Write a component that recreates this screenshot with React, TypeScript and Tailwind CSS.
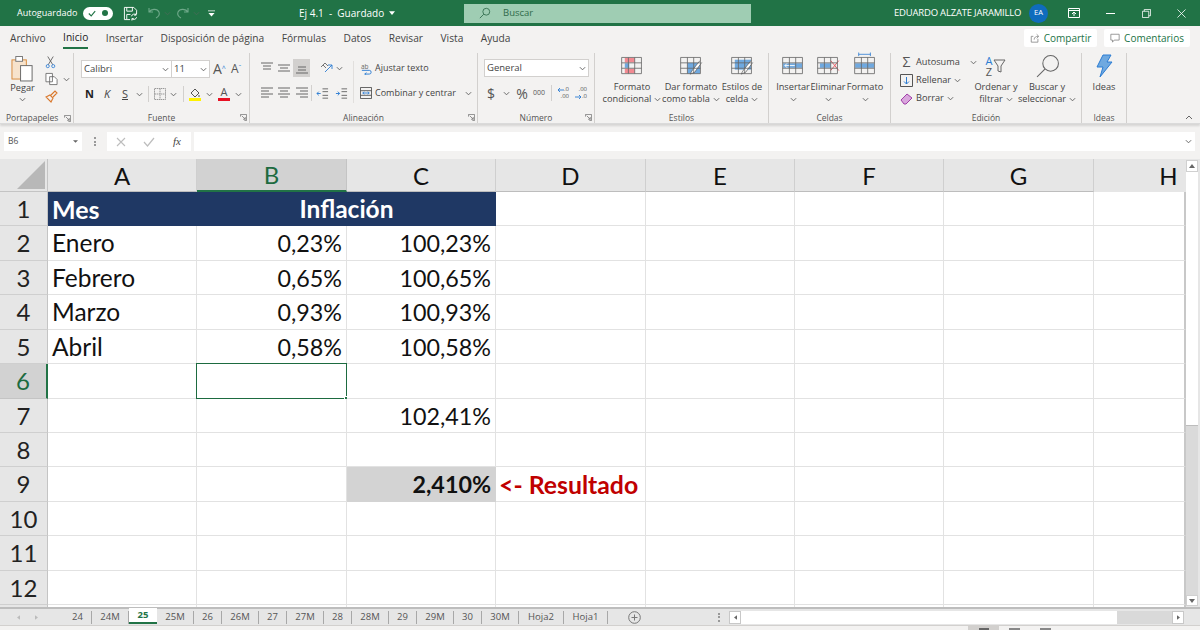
import type { ReactNode } from 'react';

const CELL_FONT = "font-['Lato','Carlito','Liberation_Sans',sans-serif]";

function Chevron({ className = '' }: { readonly className?: string }) {
  return (
    <svg viewBox="0 0 8 5" className={`w-[7px] h-[5px] shrink-0 ${className}`} fill="none" stroke="#666" strokeWidth="1.1">
      <path d="M1 1l3 3 3-3" />
    </svg>
  );
}

function Launcher() {
  return (
    <svg viewBox="0 0 8 8" className="w-[7px] h-[7px]" fill="none" stroke="#777" strokeWidth="0.9">
      <path d="M.5 3V.5H7.5V7.5H5M2 2l4 4M6 3.5V6H3.5" />
    </svg>
  );
}

interface GroupProps {
  readonly width: string;
  readonly label: string;
  readonly launcher?: boolean;
  readonly children: ReactNode;
}

function Group({ width, label, launcher, children }: GroupProps) {
  return (
    <div className={`${width} shrink-0 mt-[3px] border-r border-[#D2D0CE] flex flex-col`}>
      <div className="flex-1 flex min-h-0">{children}</div>
      <div className="h-[10px] relative text-center text-[8.5px] leading-[10px] text-[#555] whitespace-nowrap">
        {label}
        {launcher && (
          <span className="absolute right-[2px] top-[1px] flex">
            <Launcher />
          </span>
        )}
      </div>
    </div>
  );
}

interface BigButtonProps {
  readonly width: string;
  readonly icon: ReactNode;
  readonly lines: readonly ReactNode[];
}

function BigButton({ width, icon, lines }: BigButtonProps) {
  return (
    <div className={`${width} shrink-0 flex flex-col items-center`}>
      <div className="h-[26px] mb-[2px] flex items-center justify-center">{icon}</div>
      {lines.map((line, i) => (
        <div key={i} className="h-[12px] flex items-center gap-[3px] text-[9.2px] text-[#444] whitespace-nowrap">
          {line}
        </div>
      ))}
    </div>
  );
}

function Slot({ width, children, className = '' }: { readonly width: string; readonly children?: ReactNode; readonly className?: string }) {
  return <div className={`${width} shrink-0 h-full flex items-center justify-center ${className}`}>{children}</div>;
}

function VSep() {
  return <div className="w-px h-[16px] bg-[#D2D0CE]" />;
}

function AlignIcon({ kind }: { readonly kind: 'top' | 'mid' | 'bottom' | 'left' | 'center' | 'right' }) {
  const paths = {
    top: 'M1 2h12M3 5h8M3 8h8',
    mid: 'M1 4h12M3 7h8M1 10h12',
    bottom: 'M3 6h8M3 9h8M1 12h12',
    left: 'M1 2h12M1 5h8M1 8h12M1 11h8',
    center: 'M1 2h12M3 5h8M1 8h12M3 11h8',
    right: 'M1 2h12M5 5h8M1 8h12M5 11h8',
  };
  return (
    <svg viewBox="0 0 14 14" className="w-[14px] h-[14px]" fill="none" stroke="#666" strokeWidth="1">
      <path d={paths[kind]} />
    </svg>
  );
}

function TitleBar() {
  return (
    <div className="h-[26px] shrink-0 bg-[#217346] flex items-center text-white text-[10px]">
      <div className="w-[464px] shrink-0 flex items-center pl-[17px]">
        <span className="w-[66px] text-[9px] whitespace-nowrap">Autoguardado</span>
        <div className="w-[30px] h-[13px] rounded-full bg-white flex items-center justify-between px-[5px]">
          <svg viewBox="0 0 10 8" className="w-[8px] h-[7px]" fill="none" stroke="#217346" strokeWidth="1.4">
            <path d="M1 4l3 3 5-6" />
          </svg>
          <span className="w-[6px] h-[6px] rounded-full bg-[#217346]" />
        </div>
        <svg viewBox="0 0 16 16" className="w-[15px] h-[15px] ml-[10px]" fill="none" stroke="#fff" strokeWidth="1">
          <path d="M1.5 1.5h10l3 3v4M1.5 1.5v13h6M4 1.5v4h6v-4M4 14v-5h4" />
          <path d="M9 11a3 3 0 0 1 5-1.5M14.5 12a3 3 0 0 1-5 1.5M14 7.5v2.2h-2.2M9.5 15.500v-2h2" />
        </svg>
        <svg viewBox="0 0 14 14" className="w-[14px] h-[14px] ml-[9px]" fill="none" stroke="#6FA98A" strokeWidth="1.1">
          <path d="M2 2v4h4M2 6c2-3 8-4 10 0 1 3-1 5-3 6" />
        </svg>
        <Chevron className="ml-[3px] opacity-50" />
        <svg viewBox="0 0 14 14" className="w-[14px] h-[14px] ml-[5px]" fill="none" stroke="#6FA98A" strokeWidth="1.1">
          <path d="M12 2v4H8M12 6c-2-3-8-4-10 0-1 3 1 5 3 6" />
        </svg>
        <Chevron className="ml-[3px] opacity-50" />
        <svg viewBox="0 0 8 8" className="w-[7px] h-[7px] ml-[8px]" fill="#fff">
          <path d="M0 .5h8V1.500H0zM.5 3.500h7L4 7.500z" />
        </svg>
        <span className="ml-[84px] flex items-center whitespace-nowrap">
          Ej 4.1&nbsp; -&nbsp; Guardado
          <svg viewBox="0 0 8 5" className="w-[6px] h-[4px] ml-[5px]" fill="#fff">
            <path d="M0 0h8L4 5z" />
          </svg>
        </span>
      </div>
      <div className="w-[287px] h-[19px] shrink-0 bg-[#9FCDB3] flex items-center pl-[15px] text-[9.5px] text-[#2F6B4B]">
        <svg viewBox="0 0 14 14" className="w-[12px] h-[12px]" fill="none" stroke="#2F6B4B" strokeWidth="1">
          <circle cx="8.500" cy="5.500" r="4" />
          <path d="M5.500 8.500L1 13" />
        </svg>
        <span className="ml-[12px]">Buscar</span>
      </div>
      <div className="flex-1 flex items-center pl-[143px]">
        <span className="w-[135px] whitespace-nowrap text-[9.5px] tracking-[-0.2px]">EDUARDO ALZATE JARAMILLO</span>
        <span className="w-[19px] h-[19px] rounded-full bg-[#0F6CBD] flex items-center justify-center text-[7.5px]">EA</span>
        <svg viewBox="0 0 12 10" className="w-[12px] h-[10px] ml-[20px]" fill="none" stroke="#fff">
          <path d="M.5.500h11v9H.500zM.5 2.500h11M6 8V4M4 6l2-2 2 2" />
        </svg>
        <span className="w-[9px] h-px bg-white ml-[26px]" />
        <svg viewBox="0 0 10 10" className="w-[9px] h-[9px] ml-[27px]" fill="none" stroke="#fff" strokeWidth="0.9">
          <path d="M.5 2.500h7v7h-7zM2.500 2.500v-2h7v7h-2" />
        </svg>
        <svg viewBox="0 0 10 10" className="w-[9px] h-[9px] ml-[26px]" fill="none" stroke="#fff" strokeWidth="0.9">
          <path d="M.5.500l9 9M9.500.500l-9 9" />
        </svg>
      </div>
    </div>
  );
}

const TABS = ['Archivo', 'Inicio', 'Insertar', 'Disposición de página', 'Fórmulas', 'Datos', 'Revisar', 'Vista', 'Ayuda'];

function TabRow() {
  return (
    <div className="h-[24px] shrink-0 flex items-center pl-[10px] pr-[10px] text-[10.2px] text-[#444]">
      <div className="flex items-start gap-[17.5px] h-[22px]">
        {TABS.map((tab) => (
          <span
            key={tab}
            className={`h-[22px] pt-px flex items-center whitespace-nowrap ${
              tab === 'Inicio' ? 'text-[#222] border-b-2 border-[#217346]' : ''
            }`}
          >
            {tab}
          </span>
        ))}
      </div>
      <div className="ml-auto flex gap-[7px] text-[10px] text-[#217346]">
        <div className="w-[73px] h-[18px] bg-white flex items-center justify-center gap-[4px] rounded-[2px]">
          <svg viewBox="0 0 12 12" className="w-[10px] h-[10px]" fill="none" stroke="#888">
            <path d="M4 4H1.500v7h8V7M5 8c0-3 2-4 5-4M8 1.500L10.500 4 8 6.500" />
          </svg>
          Compartir
        </div>
        <div className="w-[86px] h-[18px] bg-white flex items-center justify-center gap-[4px] rounded-[2px]">
          <svg viewBox="0 0 12 12" className="w-[10px] h-[10px]" fill="none" stroke="#888">
            <path d="M1 1.500h10v7H5L3 11V8.500H1z" />
          </svg>
          Comentarios
        </div>
      </div>
    </div>
  );
}

function Clipboard() {
  return (
    <div className="w-[74px] shrink-0 mt-[3px] border-r border-[#D2D0CE] flex flex-col">
      <div className="flex-1 flex min-h-0">
        <div className="w-[45px] shrink-0 flex flex-col items-center">
          <svg viewBox="0 0 24 28" className="w-[23px] h-[27px] mt-[2px]" fill="none">
            <rect x="1" y="5" width="15" height="20" fill="#F7E3CC" stroke="#D88A3A" />
            <rect x="5" y="1.500" width="7" height="5" fill="#fff" stroke="#777" />
            <rect x="10" y="11" width="12" height="16" fill="#fff" stroke="#666" />
          </svg>
          <span className="h-[12px] leading-[12px] text-[9.200px] text-[#444]">Pegar</span>
          <Chevron className="mt-[3px]" />
        </div>
        <div className="flex flex-col items-start gap-[3px] pt-[2px]">
          <svg viewBox="0 0 12 14" className="w-[11px] h-[14px]" fill="none" stroke="#555" strokeWidth="0.9">
            <path d="M3 1l5.500 9M9 1L3.500 10" />
            <circle cx="3" cy="11.500" r="1.700" stroke="#2B7CD3" />
            <circle cx="9" cy="11.500" r="1.700" stroke="#2B7CD3" />
          </svg>
          <div className="flex items-center gap-[5px]">
            <svg viewBox="0 0 14 14" className="w-[13px] h-[14px]" fill="none" stroke="#666" strokeWidth="0.9">
              <path d="M1 1h7v9H1zM5 4.500h5l3 3V13H5z" fill="#fff" />
            </svg>
            <Chevron />
          </div>
          <svg viewBox="0 0 14 14" className="w-[14px] h-[14px]" fill="none" stroke="#D9782D" strokeWidth="1.1">
            <path d="M1 8l4-2 3 3-2 4zM6 6l4-4 2 2-4 4" />
          </svg>
        </div>
      </div>
      <div className="h-[10px] flex items-center text-[8.5px] text-[#555] pl-[6px] pr-[2px] justify-between">
        Portapapeles
        <Launcher />
      </div>
    </div>
  );
}

function FontGroup() {
  return (
    <Group width="w-[176px]" label="Fuente" launcher>
      <div className="flex flex-col pl-[7px] pt-[7px]">
        <div className="h-[18px] flex items-center">
          <div className="w-[91px] h-[18px] bg-white border border-[#D2D0CE] flex items-center justify-between px-[2px] text-[9.5px] text-[#444]">
            Calibri
            <Chevron />
          </div>
          <div className="w-[38px] h-[18px] bg-white border border-l-0 border-[#D2D0CE] flex items-center justify-between px-[2px] text-[9.5px] text-[#444]">
            11
            <Chevron />
          </div>
          <span className="ml-[3px] text-[14px] leading-none text-[#555]">
            A<sup className="text-[7px] text-[#2B7CD3]">^</sup>
          </span>
          <span className="ml-[5px] text-[12px] leading-none text-[#555]">
            A<sup className="text-[7px] text-[#2B7CD3]">ˇ</sup>
          </span>
        </div>
        <div className="h-[18px] mt-[7px] flex items-center text-[#444]">
          <Slot width="w-[17px]" className="font-bold text-[11px] text-[#222]">N</Slot>
          <Slot width="w-[18px]" className="italic text-[11px]">K</Slot>
          <Slot width="w-[18px]" className="underline text-[11px]">S</Slot>
          <Slot width="w-[10px]"><Chevron /></Slot>
          <Slot width="w-[8px]"><VSep /></Slot>
          <Slot width="w-[16px]">
            <svg viewBox="0 0 12 12" className="w-[12px] h-[12px]" fill="none" stroke="#999" strokeDasharray="1.500 .6">
              <path d="M.5.500h11v11H.500zM6 .5v11M.5 6h11" />
            </svg>
          </Slot>
          <Slot width="w-[11px]"><Chevron /></Slot>
          <Slot width="w-[8px]"><VSep /></Slot>
          <Slot width="w-[16px]">
            <div className="flex flex-col items-center">
              <svg viewBox="0 0 12 10" className="w-[12px] h-[10px]" fill="none" stroke="#555">
                <path d="M2 5l4-4 4 4-4 4zM10 7v2" />
              </svg>
              <div className="w-[12px] h-[3px] bg-[#FFF200]" />
            </div>
          </Slot>
          <Slot width="w-[12px]"><Chevron /></Slot>
          <Slot width="w-[18px]">
            <div className="flex flex-col items-center text-[11px] leading-[10px] text-[#555]">
              A
              <div className="w-[12px] h-[3px] bg-[#E81123] mt-[1px]" />
            </div>
          </Slot>
          <Slot width="w-[10px]"><Chevron /></Slot>
        </div>
      </div>
    </Group>
  );
}

function AlignmentGroup() {
  return (
    <Group width="w-[228px]" label="Alineación" launcher>
      <div className="flex pl-[8px] pt-[6px]">
        <div className="w-[95px] flex flex-col">
          <div className="h-[18px] flex items-center">
            <Slot width="w-[17px]"><AlignIcon kind="top" /></Slot>
            <Slot width="w-[18px]"><AlignIcon kind="mid" /></Slot>
            <Slot width="w-[17px]" className="bg-[#D2D0CE]"><AlignIcon kind="bottom" /></Slot>
            <Slot width="w-[9px]" />
            <Slot width="w-[16px]">
              <svg viewBox="0 0 14 14" className="w-[14px] h-[14px]" fill="none" stroke="#666" strokeWidth="0.9">
                <path d="M1 6l4-4 3 3M3 4l3 3" />
                <path d="M5 11l7-7M12 8V4H8" stroke="#2B7CD3" />
              </svg>
            </Slot>
            <Slot width="w-[8px]"><Chevron /></Slot>
          </div>
          <div className="h-[18px] mt-[7px] flex items-center">
            <Slot width="w-[17px]"><AlignIcon kind="left" /></Slot>
            <Slot width="w-[18px]"><AlignIcon kind="center" /></Slot>
            <Slot width="w-[17px]"><AlignIcon kind="right" /></Slot>
            <Slot width="w-[2px]"><VSep /></Slot>
            <Slot width="w-[21px]">
              <svg viewBox="0 0 14 14" className="w-[13px] h-[13px]" fill="none" stroke="#666">
                <path d="M7 2h6M7 5h6M7 9h6M7 12h6" />
                <path d="M5 7H1M3 5L1 7l2 2" stroke="#2B7CD3" />
              </svg>
            </Slot>
            <Slot width="w-[16px]">
              <svg viewBox="0 0 14 14" className="w-[13px] h-[13px]" fill="none" stroke="#666">
                <path d="M7 2h6M7 5h6M7 9h6M7 12h6" />
                <path d="M1 7h4M3 5l2 2-2 2" stroke="#2B7CD3" />
              </svg>
            </Slot>
          </div>
        </div>
        <div className="w-px h-[42px] bg-[#E1DFDD] mt-[2px]" />
        <div className="flex flex-col pl-[6px] text-[9px] text-[#444]">
          <div className="h-[18px] flex items-center gap-[2px] whitespace-nowrap">
            <svg viewBox="0 0 14 14" className="w-[13px] h-[13px]" fill="none" stroke="#2B7CD3">
              <path d="M2 9h8a2 2 0 0 1 0 4H6M7 11.500l-2 1.500 2 1.500" />
              <text x="1" y="7" fontSize="7" fill="#666" stroke="none">ab</text>
            </svg>
            Ajustar texto
          </div>
          <div className="h-[18px] mt-[7px] flex items-center gap-[3px] whitespace-nowrap">
            <svg viewBox="0 0 13 13" className="w-[12px] h-[12px]" fill="none" stroke="#555">
              <path d="M.5.500h12v12H.500zM.5 4h12M.5 9h12" />
              <path d="M3 6.500h7M4.500 5L3 6.500 4.500 8M8.500 5L10 6.500 8.500 8" stroke="#2B7CD3" />
            </svg>
            Combinar y centrar
            <Chevron className="ml-[6px]" />
          </div>
        </div>
      </div>
    </Group>
  );
}

function NumberGroup() {
  return (
    <Group width="w-[117px]" label="Número" launcher>
      <div className="flex flex-col pl-[6px] pt-[6px]">
        <div className="w-[105px] h-[18px] bg-white border border-[#D2D0CE] flex items-center justify-between px-[2px] text-[9.500px] text-[#444]">
          General
          <Chevron />
        </div>
        <div className="h-[18px] mt-[7px] flex items-center text-[#555]">
          <Slot width="w-[14px]" className="text-[14px]">$</Slot>
          <Slot width="w-[16px]"><Chevron /></Slot>
          <Slot width="w-[16px]" className="text-[14px]">%</Slot>
          <Slot width="w-[18px]" className="text-[7px]">000</Slot>
          <Slot width="w-[6px]"><VSep /></Slot>
          <Slot width="w-[18px]">
            <div className="flex flex-col items-end text-[6px] leading-[7px]">
              <span className="flex items-center">
                <svg viewBox="0 0 7 6" className="w-[7px] h-[6px]" fill="none" stroke="#2B7CD3" strokeWidth="0.9">
                  <path d="M7 3H1M3 1L1 3l2 2" />
                </svg>
                .0
              </span>
              <span>.00</span>
            </div>
          </Slot>
          <Slot width="w-[18px]">
            <div className="flex flex-col items-end text-[6px] leading-[7px]">
              <span>.00</span>
              <span className="flex items-center">
                <svg viewBox="0 0 7 6" className="w-[7px] h-[6px]" fill="none" stroke="#2B7CD3" strokeWidth="0.9">
                  <path d="M0 3h6M4 1l2 2-2 2" />
                </svg>
                .0
              </span>
            </div>
          </Slot>
        </div>
      </div>
    </Group>
  );
}

function TableIcon({ children }: { readonly children?: ReactNode }) {
  return (
    <svg viewBox="0 0 24 20" className="w-[22px] h-[18px] overflow-visible" fill="none">
      {children}
      <path d="M.5.500h22v18H.500zM.5 6.500h22M.5 12.500h22M8 .5v18M15 .5v18" stroke="#666" strokeWidth="0.9" />
    </svg>
  );
}

function StylesGroup() {
  return (
    <Group width="w-[174px]" label="Estilos">
      <div className="flex pl-[7px]">
        <BigButton
          width="w-[60px]"
          icon={
            <TableIcon>
              <rect x="4" y="1" width="11" height="5" fill="#F28A92" />
              <rect x="4" y="7" width="5" height="5" fill="#6FA9E0" />
              <rect x="4" y="13" width="11" height="5" fill="#F28A92" />
            </TableIcon>
          }
          lines={['Formato', <>condicional <Chevron /></>]}
        />
        <BigButton
          width="w-[58px]"
          icon={
            <TableIcon>
              <rect x="8" y="6.500" width="14" height="12" fill="#6FA9E0" />
              <path d="M22 4l-8 10-3 5 5-2 8-11" fill="#fff" stroke="#555" strokeWidth="0.8" />
            </TableIcon>
          }
          lines={['Dar formato', <>como tabla <Chevron /></>]}
        />
        <BigButton
          width="w-[44px]"
          icon={
            <TableIcon>
              <rect x="4" y="3" width="18" height="11" fill="#6FA9E0" />
              <path d="M22 4l-8 10-3 5 5-2 8-11" fill="#fff" stroke="#555" strokeWidth="0.8" />
            </TableIcon>
          }
          lines={['Estilos de', <>celda <Chevron /></>]}
        />
      </div>
    </Group>
  );
}

function CellsGroup() {
  return (
    <Group width="w-[122px]" label="Celdas">
      <div className="flex pl-[7px]">
        <BigButton
          width="w-[34px]"
          icon={
            <TableIcon>
              <rect x="1" y="7" width="21" height="5" fill="#6FA9E0" />
              <path d="M14 9.500H3M6 6.500l-3 3 3 3" stroke="#fff" />
            </TableIcon>
          }
          lines={['Insertar', <Chevron />]}
        />
        <BigButton
          width="w-[36px]"
          icon={
            <TableIcon>
              <rect x="3" y="7" width="12" height="5" fill="#6FA9E0" />
              <path d="M15 4l9 11M24 4l-9 11" stroke="#E8505B" />
            </TableIcon>
          }
          lines={['Eliminar', <Chevron />]}
        />
        <BigButton
          width="w-[38px]"
          icon={
            <TableIcon>
              <rect x="1" y="7" width="21" height="5" fill="#6FA9E0" />
              <path d="M5 -3h13M5 -5v4M18 -5v4" stroke="#2B7CD3" strokeWidth="0.9" />
            </TableIcon>
          }
          lines={['Formato', <Chevron />]}
        />
      </div>
    </Group>
  );
}

function EditGroup() {
  return (
    <Group width="w-[191px]" label="Edición">
      <div className="flex pl-[9px]">
        <div className="w-[72px] shrink-0 flex flex-col text-[9.2px] text-[#444]">
          <div className="h-[18px] flex items-center gap-[3px]">
            <span className="w-[13px] shrink-0 text-center text-[14px] leading-none text-[#555]">Σ</span>
            Autosuma
            <Chevron className="ml-[7px]" />
          </div>
          <div className="h-[18px] flex items-center gap-[3px]">
            <svg viewBox="0 0 13 13" className="w-[13px] h-[13px] shrink-0" fill="none" stroke="#555">
              <path d="M.5.500h12v12H.500z" />
              <path d="M6.500 3v7M4 7.500l2.500 2.500L9 7.500" stroke="#2B7CD3" />
            </svg>
            Rellenar
            <Chevron />
          </div>
          <div className="h-[18px] flex items-center gap-[3px]">
            <svg viewBox="0 0 13 13" className="w-[13px] h-[13px] shrink-0" fill="#D9A6DD" stroke="#A03FA8">
              <path d="M1 8l6-6 5 4-6 6H4z" />
            </svg>
            Borrar
            <Chevron />
          </div>
        </div>
        <BigButton
          width="w-[48px]"
          icon={
            <div className="flex items-center gap-px">
              <div className="flex flex-col items-center text-[11px] leading-[11px]">
                <span className="text-[#2B7CD3]">A</span>
                <span className="text-[#555]">Z</span>
              </div>
              <svg viewBox="0 0 13 14" className="w-[13px] h-[14px]" fill="none" stroke="#666">
                <path d="M1 1h11L8 7v6L5 12V7z" />
              </svg>
            </div>
          }
          lines={['Ordenar y', <>filtrar <Chevron /></>]}
        />
        <BigButton
          width="w-[54px]"
          icon={
            <svg viewBox="0 0 24 24" className="w-[25px] h-[25px]" fill="none" stroke="#666">
              <circle cx="15" cy="9" r="7.500" />
              <path d="M9.500 14.500L2 22" />
            </svg>
          }
          lines={['Buscar y', <>seleccionar <Chevron /></>]}
        />
      </div>
    </Group>
  );
}

function Ribbon() {
  return (
    <div className="h-[74px] shrink-0 flex shadow-[0_2px_2px_rgba(0,0,0,0.12)] border-b border-[#DADADA]">
      <Clipboard />
      <FontGroup />
      <AlignmentGroup />
      <NumberGroup />
      <StylesGroup />
      <CellsGroup />
      <EditGroup />
      <Group width="w-[45px]" label="Ideas">
        <BigButton
          width="w-[44px]"
          icon={
            <svg viewBox="0 0 18 24" className="w-[18px] h-[24px]" fill="#6FA9E0" stroke="#2B7CD3">
              <path d="M8 1h8l-4 7h5L5 23l3-10H2z" />
            </svg>
          }
          lines={['Ideas']}
        />
      </Group>
      <div className="flex-1 flex items-end justify-end pr-[7px] pb-[3px]">
        <svg viewBox="0 0 8 5" className="w-[8px] h-[5px]" fill="none" stroke="#666">
          <path d="M1 4l3-3 3 3" />
        </svg>
      </div>
    </div>
  );
}

function FormulaBar() {
  return (
    <div className="h-[19px] shrink-0 mt-[8px] flex items-stretch pl-[4px] pr-[5px] text-[#555]">
      <div className="w-[78px] bg-white flex items-center justify-between px-[4px] text-[8.500px]">
        B6
        <svg viewBox="0 0 6 3" className="w-[5px] h-[3px]" fill="#666">
          <path d="M0 0h6L3 3z" />
        </svg>
      </div>
      <div className="w-[25px] flex flex-col items-center justify-center gap-[1.500px]">
        <span className="w-[2px] h-[2px] bg-[#999]" />
        <span className="w-[2px] h-[2px] bg-[#999]" />
        <span className="w-[2px] h-[2px] bg-[#999]" />
      </div>
      <div className="w-[84px] bg-white flex items-center">
        <Slot width="w-[28px]">
          <svg viewBox="0 0 10 10" className="w-[10px] h-[10px]" fill="none" stroke="#BDBDBD" strokeWidth="1.100">
            <path d="M1 1l8 8M9 1l-8 8" />
          </svg>
        </Slot>
        <Slot width="w-[28px]">
          <svg viewBox="0 0 12 10" className="w-[12px] h-[10px]" fill="none" stroke="#BDBDBD" strokeWidth="1.200">
            <path d="M1 5l3.500 4L11 1" />
          </svg>
        </Slot>
        <Slot width="w-[28px]" className="italic font-['Liberation_Serif',serif] text-[11px] text-[#444]">fx</Slot>
      </div>
      <div className="flex-1 ml-[3px] bg-white flex items-center justify-end pr-[3px]">
        <Chevron />
      </div>
    </div>
  );
}

const COLUMNS = ['A', 'B', 'C', 'D', 'E', 'F', 'G', 'H'];

// filas 2 a 13, columnas A, B, C y D
const ROWS: readonly (readonly string[])[] = [
  ['Enero', '0,23%', '100,23%'],
  ['Febrero', '0,65%', '100,65%'],
  ['Marzo', '0,93%', '100,93%'],
  ['Abril', '0,58%', '100,58%'],
  [],
  ['', '', '102,41%'],
  [],
  ['', '', '2,410%', '<- Resultado'],
  [],
  [],
  [],
  [],
];

function RowHeader({ n, active }: { readonly n: number; readonly active?: boolean }) {
  return (
    <div
      className={`flex items-center justify-center text-[24px] border-b ${
        active
          ? 'bg-[#D2D2D2] text-[#1D6B40] border-r-2 border-r-[#217346] border-b-[#C4C4C4]'
          : 'bg-[#E6E6E6] text-[#222] border-r border-r-[#C4C4C4] border-b-[#CFCFCF]'
      }`}
    >
      {n < 13 ? n : ''}
    </div>
  );
}

function Sheet() {
  return (
    <div className="h-[448px] shrink-0 mt-[8px] flex overflow-hidden bg-[#E6E6E6]">
      <div
        className={`w-[1186px] shrink-0 grid grid-cols-[48px_149px_150px_149px_150px_149px_149px_150px_92px] grid-rows-[33px_34px_35px_34px_35px_34px_35px_34px_34px_35px_34px_35px_34px_34px] ${CELL_FONT} text-[#111]`}
      >
        <div className="bg-[#E6E6E6] border-r border-b border-[#C4C4C4] flex items-end justify-end pr-[2px] pb-[2px]">
          <svg viewBox="0 0 28 28" className="w-[28px] h-[28px]" fill="#B8B8B8">
            <path d="M28 0v28H0z" />
          </svg>
        </div>
        {COLUMNS.map((col) => (
          <div
            key={col}
            className={`flex items-center justify-center pt-px text-[24px] ${
              col === 'B'
                ? 'bg-[#D2D2D2] text-[#1D6B40] border-r border-b-2 border-b-[#217346] border-r-[#C4C4C4]'
                : col === 'H'
                  ? 'bg-[#E6E6E6] pl-[57px] border-b-0'
                  : 'bg-[#E6E6E6] border-r border-b border-b-[#BDBDBD] border-r-[#CFCFCF]'
            }`}
          >
            {col}
          </div>
        ))}

        {/* fila 1: encabezado de la tabla */}
        <RowHeader n={1} />
        <div className="bg-[#1F3864] text-white font-bold text-[25px] flex items-center pl-[4px] pt-px">Mes</div>
        <div className="col-span-2 bg-[#1F3864] text-white font-bold text-[24.5px] flex items-center justify-center pt-px">
          Inflación
        </div>
        {COLUMNS.slice(3).map((col) => (
          <div
            key={col}
            className={`bg-white border-b border-[#E2E2E2] ${col === 'H' ? 'border-r-2 border-r-[#C8C8C8]' : 'border-r'}`}
          />
        ))}

        {ROWS.map((row, r) => (
          <RowCells key={r} n={r + 2} values={row} />
        ))}
      </div>
      <Scrollbar />
    </div>
  );
}

function RowCells({ n, values }: { readonly n: number; readonly values: readonly string[] }) {
  return (
    <>
      <RowHeader n={n} active={n === 6} />
      {COLUMNS.map((col, c) => {
        const value = values[c] ?? '';
        const isResult = n === 9 && col === 'C';
        const isNote = n === 9 && col === 'D';
        const isSelected = n === 6 && col === 'B';
        let look = 'bg-white border-r border-b border-[#E2E2E2]';
        if (isResult) look = 'bg-[#D3D3D3] font-bold border-r border-b border-[#D3D3D3]';
        if (isSelected) look = 'bg-white border border-[#1D6B40] -mt-px -ml-px';
        if (col === 'H') look = 'bg-white border-b border-b-[#E2E2E2] border-r-2 border-r-[#C8C8C8]';
        let place = 'justify-end pr-[4px]';
        if (c === 0) place = 'pl-[4px]';
        if (isNote) place = 'pl-[3px]';
        return (
          <div
            key={col}
            className={`flex items-center pt-px whitespace-nowrap relative ${look} ${place} ${
              c === 0 ? 'text-[24.5px]' : 'text-[23.3px]'
            } ${isNote ? 'font-bold text-[24.8px] text-[#C00000]' : ''}`}
          >
            {value}
            {isSelected && (
              <span className="absolute -right-[2px] -bottom-[2px] w-[4px] h-[4px] bg-[#217346] border border-white" />
            )}
          </div>
        );
      })}
    </>
  );
}

function Scrollbar() {
  return (
    <div className="flex-1 min-w-0 flex flex-col">
      <div className="w-[12px] h-[12px] mt-px shrink-0 bg-white border border-[#D0D0D0] flex items-center justify-center">
        <svg viewBox="0 0 6 4" className="w-[6px] h-[4px]" fill="#666">
          <path d="M3 0l3 4H0z" />
        </svg>
      </div>
      <div className="w-[12px] flex-1 flex flex-col bg-[#DADADA]">
        <div className="h-[254px] shrink-0 bg-white border-b border-[#BDBDBD]" />
      </div>
      <div className="w-[12px] h-[11px] mb-px shrink-0 bg-white border border-[#D0D0D0] flex items-center justify-center">
        <svg viewBox="0 0 6 4" className="w-[6px] h-[4px]" fill="#666">
          <path d="M0 0h6L3 4z" />
        </svg>
      </div>
    </div>
  );
}

const SHEETS = [
  { name: '24', width: 'w-[28px]' },
  { name: '24M', width: 'w-[37px]' },
  { name: '25', width: 'w-[28px]' },
  { name: '25M', width: 'w-[37px]' },
  { name: '26', width: 'w-[28px]' },
  { name: '26M', width: 'w-[37px]' },
  { name: '27', width: 'w-[28px]' },
  { name: '27M', width: 'w-[37px]' },
  { name: '28', width: 'w-[28px]' },
  { name: '28M', width: 'w-[37px]' },
  { name: '29', width: 'w-[28px]' },
  { name: '29M', width: 'w-[37px]' },
  { name: '30', width: 'w-[28px]' },
  { name: '30M', width: 'w-[37px]' },
  { name: 'Hoja2', width: 'w-[45px]' },
  { name: 'Hoja1', width: 'w-[44px]' },
];

function SheetTabs() {
  return (
    <div className="h-[19px] shrink-0 bg-[#E6E6E6] border-t-2 border-b border-t-[#BDBDBD] border-b-[#D2D0CE] flex items-center text-[9.500px] text-[#555]">
      <div className="w-[64px] shrink-0 flex items-center pl-[17px] gap-[15px] text-[#BBB]">
        <svg viewBox="0 0 4 6" className="w-[3px] h-[5px]" fill="currentColor"><path d="M4 0v6L0 3z" /></svg>
        <svg viewBox="0 0 4 6" className="w-[3px] h-[5px]" fill="currentColor"><path d="M0 0v6l4-3z" /></svg>
      </div>
      {SHEETS.map((sheet) => (
        <div
          key={sheet.name}
          className={`${sheet.width} shrink-0 flex items-center justify-center ${
            sheet.name === '25'
              ? 'bg-white font-bold text-[#217346] border-b-2 border-[#217346] h-[16px] -mt-[2px]'
              : 'border-r border-[#A8A8A8] h-[13px] first:border-l'
          }`}
        >
          {sheet.name}
        </div>
      ))}
      <svg viewBox="0 0 13 13" className="w-[13px] h-[13px] ml-[20px]" fill="none" stroke="#777">
        <circle cx="6.500" cy="6.500" r="5.800" />
        <path d="M6.500 3.500v6M3.500 6.500h6" />
      </svg>
      <div className="ml-[77px] flex flex-col gap-[1.500px]">
        <span className="w-[2px] h-[2px] bg-[#999]" />
        <span className="w-[2px] h-[2px] bg-[#999]" />
        <span className="w-[2px] h-[2px] bg-[#999]" />
      </div>
      <div className="ml-[9px] w-[455px] h-[13px] flex items-stretch bg-[#D9D9D9]">
        <div className="w-[12px] bg-white border border-[#C8C8C8] flex items-center justify-center">
          <svg viewBox="0 0 4 6" className="w-[3px] h-[5px]" fill="#666"><path d="M4 0v6L0 3z" /></svg>
        </div>
        <div className="w-[376px] bg-white" />
        <div className="flex-1" />
        <div className="w-[12px] bg-white border border-[#C8C8C8] flex items-center justify-center">
          <svg viewBox="0 0 4 6" className="w-[3px] h-[5px]" fill="#666"><path d="M0 0v6l4-3z" /></svg>
        </div>
      </div>
    </div>
  );
}

function StatusBar() {
  return (
    <div className="flex-1 flex items-end pl-[968px]">
      <div className="w-[31px] h-[4px] bg-[#D2D0CE] flex justify-center items-end">
        <span className="w-[10px] h-[2px] bg-[#666]" />
      </div>
      <span className="w-[11px] h-[2px] bg-[#888] ml-[10px]" />
      <span className="w-[11px] h-[2px] bg-[#888] ml-[20px]" />
    </div>
  );
}

export default function App() {
  return (
    <div className="w-[1200px] h-[630px] overflow-hidden flex flex-col bg-[#F3F2F1] font-['Open_Sans','Noto_Sans',sans-serif]">
      <TitleBar />
      <TabRow />
      <Ribbon />
      <FormulaBar />
      <Sheet />
      <SheetTabs />
      <StatusBar />
    </div>
  );
}
